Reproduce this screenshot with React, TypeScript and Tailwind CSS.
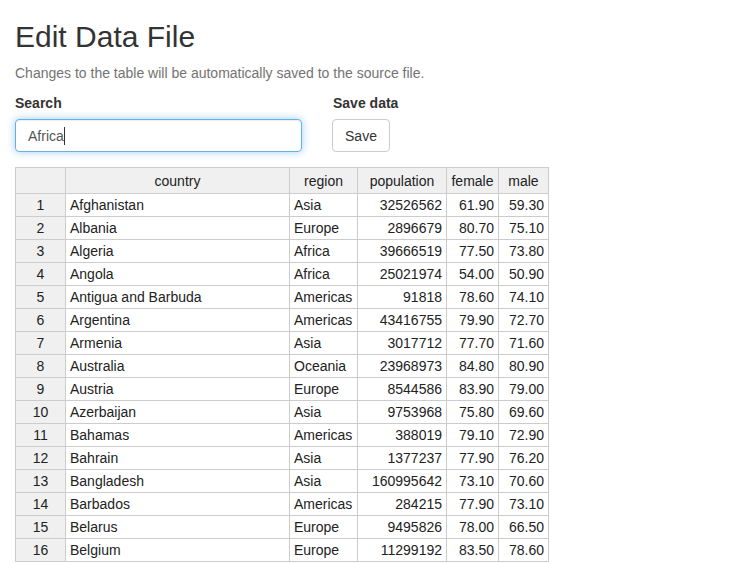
const rows: [string, string, string, string, string][] = [
  ["Afghanistan", "Asia", "32526562", "61.90", "59.30"],
  ["Albania", "Europe", "2896679", "80.70", "75.10"],
  ["Algeria", "Africa", "39666519", "77.50", "73.80"],
  ["Angola", "Africa", "25021974", "54.00", "50.90"],
  ["Antigua and Barbuda", "Americas", "91818", "78.60", "74.10"],
  ["Argentina", "Americas", "43416755", "79.90", "72.70"],
  ["Armenia", "Asia", "3017712", "77.70", "71.60"],
  ["Australia", "Oceania", "23968973", "84.80", "80.90"],
  ["Austria", "Europe", "8544586", "83.90", "79.00"],
  ["Azerbaijan", "Asia", "9753968", "75.80", "69.60"],
  ["Bahamas", "Americas", "388019", "79.10", "72.90"],
  ["Bahrain", "Asia", "1377237", "77.90", "76.20"],
  ["Bangladesh", "Asia", "160995642", "73.10", "70.60"],
  ["Barbados", "Americas", "284215", "77.90", "73.10"],
  ["Belarus", "Europe", "9495826", "78.00", "66.50"],
  ["Belgium", "Europe", "11299192", "83.50", "78.60"],
];

const cell = "border border-[#ccc] px-[4px] whitespace-nowrap overflow-hidden";

function DataTable() {
  return (
    <table className="table-fixed border-collapse text-[14px] leading-[20px] text-[#222] mt-[15px]">
      <colgroup>
        <col className="w-[50px]" />
        <col className="w-[224px]" />
        <col className="w-[68px]" />
        <col className="w-[89px]" />
        <col className="w-[52px]" />
        <col className="w-[50px]" />
      </colgroup>
      <thead>
        <tr className="h-[26px] bg-[#f0f0f0]">
          <th className={`${cell} font-normal`}></th>
          <th className={`${cell} font-normal text-center`}>country</th>
          <th className={`${cell} font-normal text-center`}>region</th>
          <th className={`${cell} font-normal text-center`}>population</th>
          <th className={`${cell} font-normal text-center`}>female</th>
          <th className={`${cell} font-normal text-center`}>male</th>
        </tr>
      </thead>
      <tbody>
        {rows.map((r, i) => (
          <tr key={i} className="h-[23px]">
            <td className={`${cell} bg-[#f0f0f0] text-center`}>{i + 1}</td>
            <td className={`${cell} bg-white`}>{r[0]}</td>
            <td className={`${cell} bg-white`}>{r[1]}</td>
            <td className={`${cell} bg-white text-right`}>{r[2]}</td>
            <td className={`${cell} bg-white text-right`}>{r[3]}</td>
            <td className={`${cell} bg-white text-right`}>{r[4]}</td>
          </tr>
        ))}
      </tbody>
    </table>
  );
}

export default function App() {
  return (
    <div className="bg-white px-[15px] font-['Liberation_Sans',Arial,sans-serif] text-[#333] text-[14px] leading-[20px]">
      <h2 className="pt-[20px] text-[30px] leading-[33px] font-normal">Edit Data File</h2>
      <p className="mt-[10px] text-[#737373]">Changes to the table will be automatically saved to the source file.</p>
      <div className="flex gap-[30px] mt-[10px]">
        <div className="w-[287px]">
          <div className="font-bold mb-[6px]">Search</div>
          <div className="h-[33px] border border-[#66afe9] rounded-[4px] px-[12px] flex items-center shadow-[inset_0_1px_1px_rgba(0,0,0,0.075),0_0_8px_rgba(102,175,233,0.6)] text-[#555]">
            <span>Africa</span>
            <span className="w-px h-[18px] bg-[#333]"></span>
          </div>
        </div>
        <div>
          <div className="font-bold mb-[6px] ml-px">Save data</div>
          <button className="h-[33px] w-[58px] border border-[#ccc] rounded-[4px] bg-white text-[#333]">Save</button>
        </div>
      </div>
      <DataTable />
    </div>
  );
}
